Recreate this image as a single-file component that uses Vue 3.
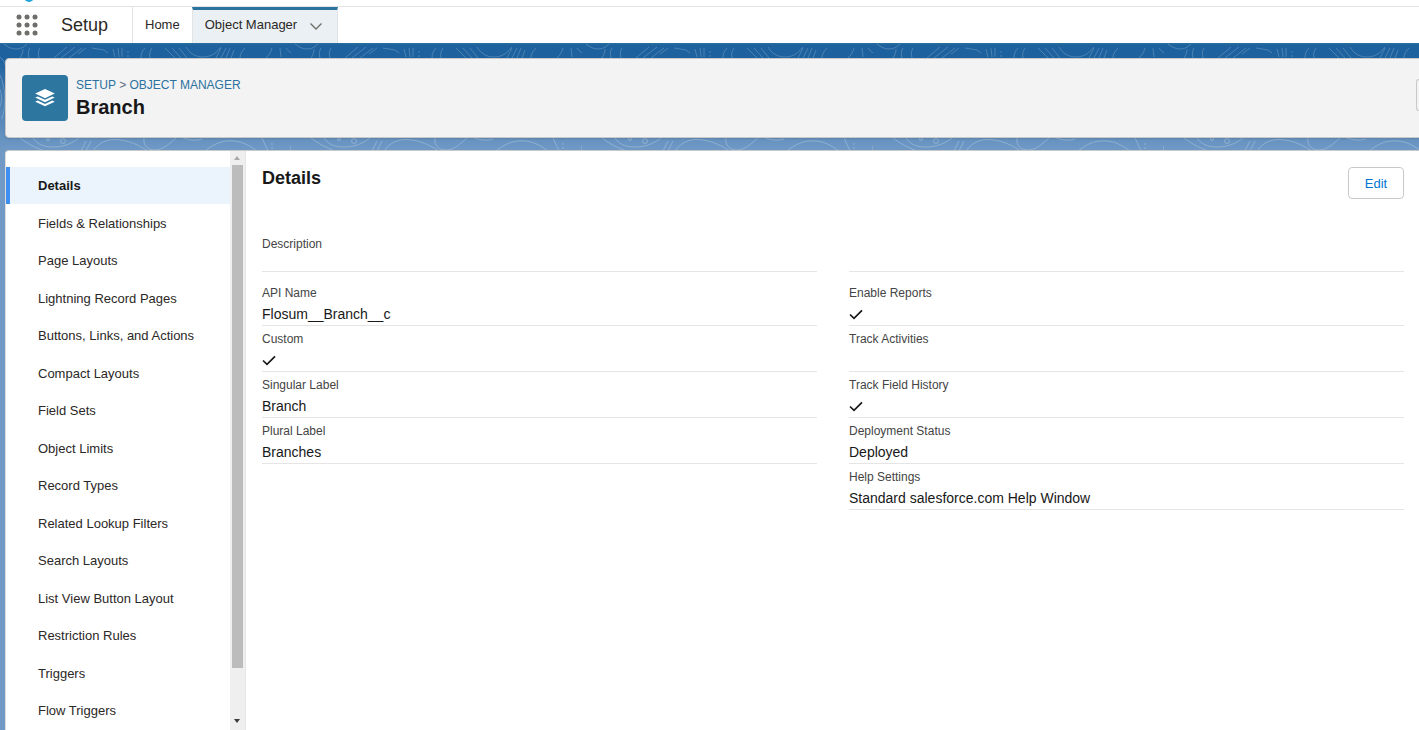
<script setup>
const navItems = ['Details','Fields & Relationships','Page Layouts','Lightning Record Pages','Buttons, Links, and Actions','Compact Layouts','Field Sets','Object Limits','Record Types','Related Lookup Filters','Search Layouts','List View Button Layout','Restriction Rules','Triggers','Flow Triggers']
const leftFields = [
  { label: 'API Name', value: 'Flosum__Branch__c' },
  { label: 'Custom', check: true },
  { label: 'Singular Label', value: 'Branch' },
  { label: 'Plural Label', value: 'Branches' },
]
const rightFields = [
  { label: 'Enable Reports', check: true },
  { label: 'Track Activities' },
  { label: 'Track Field History', check: true },
  { label: 'Deployment Status', value: 'Deployed' },
  { label: 'Help Settings', value: 'Standard salesforce.com Help Window' },
]
const dots = [5,13,21].flatMap(y => [5,13,21].map(x => ({ x, y })))
</script>

<template>
  <div class="page">
    <div class="top-strip"><span class="logo-arc"></span></div>
    <nav class="nav">
      <svg class="launcher" width="26" height="26" viewBox="0 0 26 26">
        <circle v-for="d in dots" :key="d.x + '-' + d.y" :cx="d.x" :cy="d.y" r="2.5" fill="#706e6b" />
      </svg>
      <span class="app-name">Setup</span>
      <div class="tab">Home</div>
      <div class="tab active">
        <span>Object Manager</span>
        <svg width="14" height="14" viewBox="0 0 14 14" class="chev"><path d="M1.500 4.500 7 10l5.500-5.500" fill="none" stroke="#706e6b" stroke-width="1.400"/></svg>
      </div>
    </nav>

    <main class="stage">
      <svg class="contours" width="1419" height="108" viewBox="0 0 1419 108" fill="none">
        <defs>
          <pattern id="topo" x="0" y="0" width="291" height="108" patternUnits="userSpaceOnUse">
            <g stroke="#ffffff" stroke-opacity=".2" stroke-width="1" fill="none">
              <path d="M4 1c4 3 7 5 12 5s8-2 11-5M23 6c0 3-1 6-3 9M30 5c-2 3-2 7-1 10M40 5c-2 3-2 7-1 10"/>
              <path d="M54 15 67 4M61 15 75 4M69 15 82 5M78 11 86 5M92 5l12 2 4 3"/>
              <path d="M113 6l2 8M118 5l1 9M122 5v9M128 8v2M128 12v2M141 15c0-4 1-7 4-10M150 15c-1-4 0-7 2-10"/>
              <path d="M165 5l10 10M172 5l9 10M179 5l8 10M186 4c3 5 8 10 17 10s14-5 18-10M216 15l5-10M221 15l5-10M226 15l4-10M231 15l3-8M240 15c0-4 2-7 5-10"/>
              <path d="M266 15c3-3 5-6 6-10M280 5l1 9M286 5c3 4 7 7 12 7"/>
            </g>
            <g stroke="#ffffff" stroke-opacity=".24" stroke-width="1" fill="none">
              <path d="M20 95c8 6 14 9 24 13M33 95c4 6 10 9 20 9s18-3 26-9"/>
              <circle cx="48" cy="96" r="1.500"/>
              <circle cx="63" cy="98" r="2.500"/>
              <path d="M81 108l5-10M86 108l5-10M93 108c6-9 16-13 28-11 13 2 20 7 27 11"/>
              <path d="M144 95c-1 7 3 12 11 12s14-6 21-12M183 95c7 2 12 3 19 1"/>
              <path d="M205 108c9-7 17-11 29-10 11 1 17 6 23 10M262 95l6 13"/>
              <path d="M272 100v2M272 104v2M291 108c-1-5 1-9 5-13"/>
            </g>
          </pattern>
        </defs>
        <rect x="0" y="0" width="1419" height="108" fill="url(#topo)"/>
        <path d="M0 32c5 12 7 28 2 44M0 46c2 6 2 12 0 18M0 14c3 3 5 5 5 8" stroke="#ffffff" stroke-opacity=".22"/>
      </svg>

      <header class="page-header">
        <div class="obj-icon">
          <svg width="22" height="20" viewBox="0 0 22 20" fill="#fff">
            <path d="M11 1 1.200 5.600 11 10.200l9.800-4.600z"/>
            <path d="M1.200 9.600 3.800 8.400 11 11.800l7.200-3.400 2.600 1.200L11 14.200z"/>
            <path d="M1.200 13.700 3.800 12.500 11 15.900l7.200-3.400 2.600 1.200L11 18.300z"/>
          </svg>
        </div>
        <div class="heading">
          <div class="crumbs"><a>SETUP</a> &gt; <a>OBJECT MANAGER</a></div>
          <h1>Branch</h1>
        </div>
        <div class="header-stub"></div>
      </header>

      <section class="panel">
        <aside class="sidebar">
          <ul class="side-list">
            <li v-for="(item, i) in navItems" :key="item" :class="{ current: i === 0 }">{{ item }}</li>
          </ul>
        </aside>
        <div class="scrollbar">
          <span class="arrow up"></span>
          <div class="thumb"></div>
          <span class="arrow down"></span>
        </div>
        <div class="content">
          <div class="content-head">
            <h2>Details</h2>
            <button class="edit">Edit</button>
          </div>
          <div class="desc-row">
            <div class="field desc"><span class="lbl">Description</span></div>
            <div class="field desc"></div>
          </div>
          <div class="columns">
            <div class="col">
              <div v-for="f in leftFields" :key="f.label" class="field">
                <span class="lbl">{{ f.label }}</span>
                <div class="val">
                  <svg v-if="f.check" width="14" height="11" viewBox="0 0 14 11"><path d="M1 5.500 5 9.300 13 1.300" fill="none" stroke="#181818" stroke-width="1.700"/></svg>
                  <template v-else>{{ f.value }}</template>
                </div>
              </div>
            </div>
            <div class="col">
              <div v-for="f in rightFields" :key="f.label" class="field">
                <span class="lbl">{{ f.label }}</span>
                <div class="val">
                  <svg v-if="f.check" width="14" height="11" viewBox="0 0 14 11"><path d="M1 5.500 5 9.300 13 1.300" fill="none" stroke="#181818" stroke-width="1.700"/></svg>
                  <template v-else>{{ f.value }}</template>
                </div>
              </div>
            </div>
          </div>
        </div>
      </section>
    </main>
  </div>
</template>

<style>
html, body { margin: 0; height: 100%; overflow: hidden; background: #fff; }
</style>

<style scoped>
.page {
  width: 1419px; height: 730px; overflow: hidden; display: flex; flex-direction: column;
  font-family: "Liberation Sans", Arial, sans-serif; color: #181818; background: #fff;
}
.top-strip { height: 6px; border-bottom: 1px solid #e3e3e3; position: relative; overflow: hidden; flex: none; }
.logo-arc { position: absolute; left: 24px; top: -8px; width: 10px; height: 10px; border-radius: 50%; background: #1fa5dc; }
.nav { height: 36px; flex: none; display: flex; align-items: stretch; background: #fff; }
.launcher { margin: 5px 0 0 14px; }
.app-name { width: 71px; margin-left: 21px; font-size: 18px; line-height: 36px; color: #2b2826; }
.tab {
  display: flex; align-items: center; font-size: 13px; padding: 0 12px; color: #2b2826;
  border-left: 1px solid #e3e3e3; line-height: 36px;
}
.tab.active {
  width: 146px; box-sizing: border-box; background: #eaf0f4; border-top: 3px solid #2b729f;
  border-right: 1px solid #dfe3e6; border-left: 1px solid #e3e3e3; justify-content: space-between; padding: 0 14px 3px 12px;
}
.chev { margin-top: 1px; }
.stage {
  position: relative; flex: 1; min-height: 0; padding: 15px 0 0 5px; box-sizing: border-box;
  background: linear-gradient(to bottom, #2b729f 0, #1d619e 2px, #1d619e 14px, #4a80b4 60px, #7099c5 108px, #7099c5 100%);
}
.contours { position: absolute; left: 0; top: 0; }
.page-header {
  position: relative; height: 80px; box-sizing: border-box; margin-right: -4px;
  background: #f3f3f3; border: 1px solid #c9c9c9; border-radius: 4px; display: flex; align-items: center;
  padding-left: 16px; gap: 8px; box-shadow: 0 1px 2px rgba(0,0,0,.12);
}
.obj-icon {
  width: 46px; height: 46px; border-radius: 4px; background: #2d769f;
  display: flex; align-items: center; justify-content: center; flex: none;
}
.heading { margin-top: -2px; }
.crumbs { font-size: 12px; line-height: 16px; color: #5c6b7a; margin-top: 1px; }
.crumbs a { color: #2b729f; }
h1 { margin: 2px 0 0; font-size: 20px; line-height: 24px; font-weight: 700; color: #181818; }
.header-stub {
  position: absolute; right: 3px; top: 20px; width: 3px; height: 32px; box-sizing: border-box;
  border: 1px solid #c9c9c9; border-right: 0; border-radius: 4px 0 0 4px; background: #f3f3f3;
}
.panel {
  position: relative; margin-top: 12px; height: 600px; background: #fff; display: flex;
  border-top: 1px solid #c9c9c9; border-left: 1px solid #dcdcdc; border-top-left-radius: 4px;
}
.sidebar { width: 224px; flex: none; padding-top: 16px; box-sizing: border-box; overflow: hidden; }
.side-list { list-style: none; margin: 0; padding: 0; }
.side-list li {
  height: 37.5px; line-height: 37.5px; padding-left: 32px; font-size: 13px; color: #2b2826; white-space: nowrap;
}
.side-list li.current {
  height: 37px; margin-bottom: .5px; background: #ebf3fd; font-weight: 700; padding-left: 28px; border-left: 4px solid #3e90f0; color: #181818;
}
.scrollbar {
  width: 15px; flex: none; background: #efefef; position: relative; border-right: 1px solid #e6e6e6;
}
.thumb { position: absolute; left: 2px; right: 2px; top: 14px; height: 503px; background: #bcbcbc; }
.arrow { position: absolute; left: 4px; width: 0; height: 0; border-left: 3.5px solid transparent; border-right: 3.5px solid transparent; }
.arrow.up { top: 5px; border-bottom: 4px solid #a8a8a8; }
.arrow.down { top: 568px; border-top: 4px solid #3a3a3a; }
.content { flex: 1; padding: 0 15px 0 16px; min-width: 0; }
.content-head { display: flex; justify-content: space-between; align-items: flex-start; height: 85px; padding-top: 15px; box-sizing: border-box; }
h2 { margin: 0; font-size: 18px; line-height: 24px; font-weight: 700; color: #181818; }
.edit {
  width: 56px; height: 32px; margin-top: 1px; background: #fff; border: 1px solid #c9c9c9; border-radius: 4px;
  color: #0176d3; font: 13px "Liberation Sans", Arial, sans-serif; padding: 0;
}
.desc-row, .columns { display: flex; gap: 32px; }
.columns { margin-top: 8px; }
.col { flex: 1; min-width: 0; }
.desc-row > .field { flex: 1; min-width: 0; height: 36px; padding-top: 0; }
.field { height: 46px; box-sizing: border-box; border-bottom: 1px solid #e5e5e5; padding-top: 5px; }
.lbl { display: block; font-size: 12px; line-height: 16px; color: #444; }
.val { height: 24px; box-sizing: border-box; padding-top: 2px; font-size: 14px; line-height: 22px; color: #181818; display: flex; align-items: center; }
</style>
